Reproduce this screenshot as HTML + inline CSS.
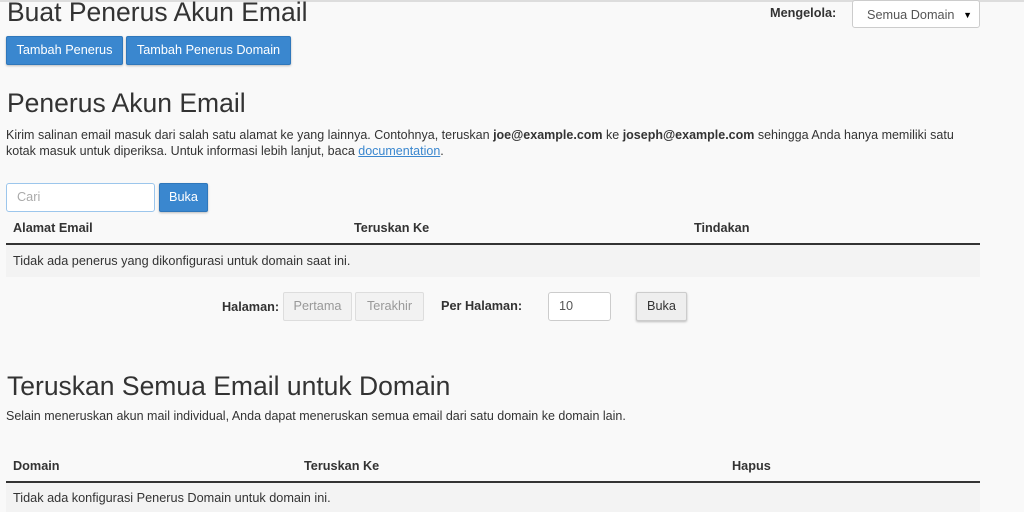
<!DOCTYPE html>
<html><head><style>
*{box-sizing:border-box;margin:0;padding:0}
body{width:1024px;height:512px;overflow:hidden;background:#f9f9f9;font-family:"Liberation Sans",sans-serif;color:#333;font-size:12.7px;position:relative}
.a{position:absolute;white-space:nowrap}
h1{font-weight:normal;font-size:26.5px;color:#333}
.btn{position:absolute;background:#3a87cf;color:#fff;border:1px solid #2f77bb;border-radius:2px;font-size:12.7px;text-align:center;box-shadow:0 1px 2px rgba(0,0,0,.25)}
.gb{position:absolute;background:#f2f2f2;border:1px solid #ddd;color:#999;border-radius:2px;text-align:center}
.th{position:absolute;font-weight:bold;font-size:12.7px}
.line{position:absolute;left:6px;width:974px;height:2px;background:#333}
.row{position:absolute;left:6px;width:974px;background:#f3f3f3}
</style></head><body>
<div class="a" style="left:0;top:0;width:1024px;height:2px;background:#ddd"></div>
<h1 class="a" style="left:7px;top:-3px">Buat Penerus Akun Email</h1>
<div class="btn" style="left:6px;top:36px;width:117px;height:29px;line-height:27px">Tambah Penerus</div>
<div class="btn" style="left:126px;top:36px;width:165px;height:29px;line-height:27px">Tambah Penerus Domain</div>
<div class="a" style="left:770px;top:6px;font-weight:bold">Mengelola:</div>
<div class="a" style="left:852px;top:0px;width:128px;height:28px;background:#fff;border:1px solid #ccc;border-radius:3px;line-height:28px;padding-left:14px;color:#555">Semua Domain<span style="position:absolute;right:7px;font-size:9px;color:#000">▼</span></div>
<h1 class="a" style="left:7px;top:88px">Penerus Akun Email</h1>
<div class="a" style="left:6px;top:127px;line-height:16px;font-size:12.5px">Kirim salinan email masuk dari salah satu alamat ke yang lainnya. Contohnya, teruskan <b>joe@example.com</b> ke <b>joseph@example.com</b> sehingga Anda hanya memiliki satu<br>kotak masuk untuk diperiksa. Untuk informasi lebih lanjut, baca <span style="color:#3a87cf;text-decoration:underline">documentation</span>.</div>
<div class="a" style="left:6px;top:183px;width:149px;height:29px;background:#fff;border:1px solid #9cc6ec;border-radius:3px;line-height:27px;padding-left:10px;color:#aaa">Cari</div>
<div class="btn" style="left:159px;top:183px;width:49px;height:29px;line-height:27px">Buka</div>
<div class="th" style="left:13px;top:221px">Alamat Email</div>
<div class="th" style="left:354px;top:221px">Teruskan Ke</div>
<div class="th" style="left:694px;top:221px">Tindakan</div>
<div class="line" style="top:243px"></div>
<div class="row" style="top:245px;height:32px"></div>
<div class="a" style="left:13px;top:254px">Tidak ada penerus yang dikonfigurasi untuk domain saat ini.</div>
<div class="a" style="left:222px;top:300px;font-weight:bold">Halaman:</div>
<div class="gb" style="left:283px;top:292px;width:69px;height:29px;line-height:27px">Pertama</div>
<div class="gb" style="left:355px;top:292px;width:69px;height:29px;line-height:27px">Terakhir</div>
<div class="a" style="left:441px;top:299px;font-weight:bold">Per Halaman:</div>
<div class="a" style="left:548px;top:292px;width:63px;height:29px;background:#fff;border:1px solid #ccc;border-radius:3px;line-height:27px;padding-left:10px;color:#555">10</div>
<div class="a" style="left:636px;top:292px;width:51px;height:29px;background:#eee;border:1px solid #ccc;border-radius:2px;line-height:27px;text-align:center;box-shadow:0 1px 2px rgba(0,0,0,.25)">Buka</div>
<h1 class="a" style="left:7px;top:371px">Teruskan Semua Email untuk Domain</h1>
<div class="a" style="left:6px;top:409px;font-size:12.5px">Selain meneruskan akun mail individual, Anda dapat meneruskan semua email dari satu domain ke domain lain.</div>
<div class="th" style="left:13px;top:459px">Domain</div>
<div class="th" style="left:304px;top:459px">Teruskan Ke</div>
<div class="th" style="left:732px;top:459px">Hapus</div>
<div class="line" style="top:481px"></div>
<div class="row" style="top:483px;height:29px"></div>
<div class="a" style="left:13px;top:491px">Tidak ada konfigurasi Penerus Domain untuk domain ini.</div>
</body></html>
